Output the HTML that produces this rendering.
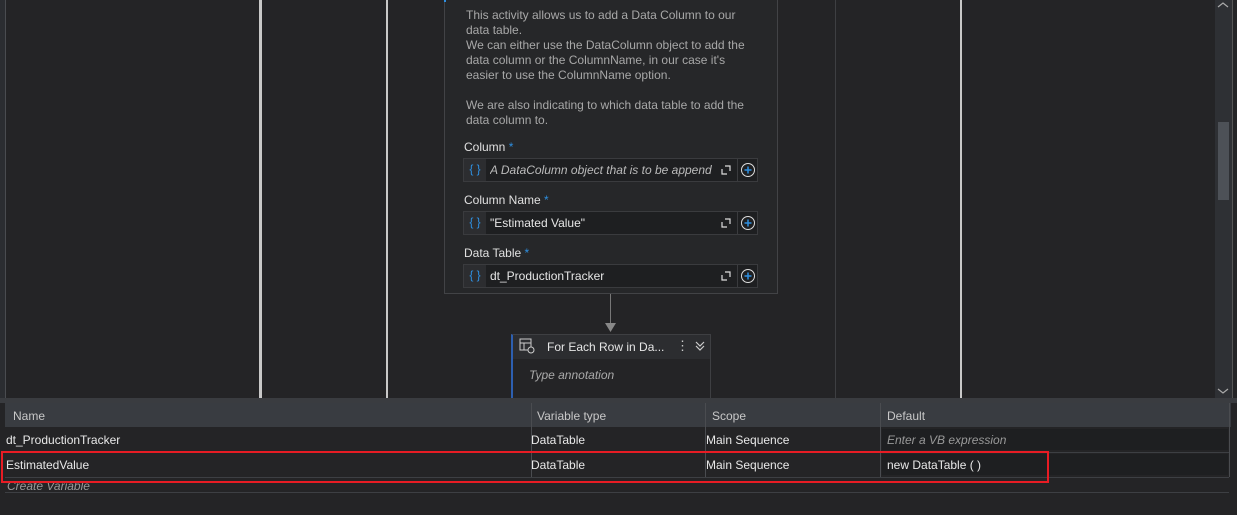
<!DOCTYPE html>
<html><head><style>
*{margin:0;padding:0;box-sizing:border-box}
body{width:1237px;height:515px;background:#242426;font-family:"Liberation Sans",sans-serif;position:relative;overflow:hidden;color:#ddd}
.a{position:absolute}
.lbl{font-size:12px;color:#e0e0e0}
.star{color:#2e8fe0}
.fld{position:absolute;left:463px;width:295px;height:24px;border:1px solid #3a3b3e;background:#1e1f21}
.fld .br{position:absolute;left:0;top:0;width:22px;height:22px;background:#2c2d30;color:#2e8fe0;font-size:12px;text-align:center;line-height:21px}
.fld .tx{position:absolute;left:26px;top:4px;font-size:12px;color:#e6e6e6;white-space:nowrap;width:224px;overflow:hidden}
.fld .ex{position:absolute;left:257px;top:6px;width:10px;height:10px}
.fld .pl{position:absolute;left:273px;top:0;width:21px;height:22px;border-left:1px solid #3a3b3e}
.cell{position:absolute;font-size:12px;color:#e8e8e8;white-space:nowrap}
</style></head><body>
<div class="a" style="left:0;top:0;width:5px;height:400px;background:#2b2d31"></div>
<div class="a" style="left:5px;top:0;width:1px;height:400px;background:#4a4c50"></div>
<div class="a" style="left:259px;top:0;width:3px;height:400px;background:#c8c8c8"></div>
<div class="a" style="left:386px;top:0;width:2px;height:400px;background:#c8c8c8"></div>
<div class="a" style="left:835px;top:0;width:1px;height:400px;background:#3e3f42"></div>
<div class="a" style="left:960px;top:0;width:2px;height:400px;background:#c8c8c8"></div>
<!-- scrollbar -->
<div class="a" style="left:1215px;top:0;width:17px;height:400px;background:#2e3034"></div>
<div class="a" style="left:1218px;top:122px;width:11px;height:78px;background:#4d5157"></div>
<svg class="a" style="left:1217px;top:1px" width="12" height="8"><path d="M1 6L6 2L11 6" fill="none" stroke="#aaa" stroke-width="1.2"/></svg>
<svg class="a" style="left:1217px;top:387px" width="12" height="8"><path d="M1 2L6 6L11 2" fill="none" stroke="#aaa" stroke-width="1.2"/></svg>
<div class="a" style="left:1232px;top:0;width:1px;height:400px;background:#555"></div>
<!-- card -->
<div class="a" style="left:444px;top:-1px;width:334px;height:295px;background:#262729;border:1px solid #424346"></div>
<div class="a" style="left:444px;top:0;width:2px;height:2px;background:#2e8fe0"></div>
<div class="a" style="left:466px;top:8px;font-size:12px;line-height:15px;color:#a8a8a8;width:282px">This activity allows us to add a Data Column to our data table.<br>We can either use the DataColumn object to add the data column or the ColumnName, in our case it's easier to use the ColumnName option.<br><br>We are also indicating to which data table to add the data column to.</div>
<div class="a lbl" style="left:464px;top:140px">Column <span class="star">*</span></div>
<div class="fld" style="top:158px"><div class="br">{ }</div><div class="tx" style="font-style:italic;color:#bbb">A DataColumn object that is to be append</div>
<svg class="ex" viewBox="0 0 10 10"><path d="M1 4V9H6M4 1H9V6" fill="none" stroke="#ddd" stroke-width="1.2"/></svg><div class="pl"><svg width="21" height="22"><circle cx="10" cy="11" r="6.5" fill="none" stroke="#ddd"/><path d="M6.5 11h7M10 7.5v7" stroke="#2e8fe0" stroke-width="1.5"/></svg></div></div>
<div class="a lbl" style="left:464px;top:193px">Column Name <span class="star">*</span></div>
<div class="fld" style="top:211px"><div class="br">{ }</div><div class="tx">"Estimated Value"</div>
<svg class="ex" viewBox="0 0 10 10"><path d="M1 4V9H6M4 1H9V6" fill="none" stroke="#ddd" stroke-width="1.2"/></svg><div class="pl"><svg width="21" height="22"><circle cx="10" cy="11" r="6.5" fill="none" stroke="#ddd"/><path d="M6.5 11h7M10 7.5v7" stroke="#2e8fe0" stroke-width="1.5"/></svg></div></div>
<div class="a lbl" style="left:464px;top:246px">Data Table <span class="star">*</span></div>
<div class="fld" style="top:264px"><div class="br">{ }</div><div class="tx">dt_ProductionTracker</div>
<svg class="ex" viewBox="0 0 10 10"><path d="M1 4V9H6M4 1H9V6" fill="none" stroke="#ddd" stroke-width="1.2"/></svg><div class="pl"><svg width="21" height="22"><circle cx="10" cy="11" r="6.5" fill="none" stroke="#ddd"/><path d="M6.5 11h7M10 7.5v7" stroke="#2e8fe0" stroke-width="1.5"/></svg></div></div>
<!-- arrow -->
<div class="a" style="left:610px;top:294px;width:1px;height:30px;background:#777"></div>
<svg class="a" style="left:605px;top:323px" width="11" height="10"><path d="M0 0H11L5.5 9Z" fill="#888"/></svg>
<!-- for each -->
<div class="a" style="left:511px;top:334px;width:200px;height:66px;background:#242426;border:1px solid #3e3f42;border-left:2px solid #2d5fb0"></div>
<div class="a" style="left:513px;top:335px;width:197px;height:24px;background:#2c2d30"></div>
<svg class="a" style="left:519px;top:338px" width="16" height="16"><rect x="1" y="1" width="11" height="11" fill="none" stroke="#ccc"/><path d="M1 5h11M5 5v7" stroke="#ccc"/><circle cx="12" cy="12" r="3" fill="#2c2d30" stroke="#ccc"/></svg>
<div class="a" style="left:547px;top:340px;font-size:12px;color:#e6e6e6">For Each Row in Da...</div>
<div class="a" style="left:676px;top:338px;font-size:13px;color:#ccc">⋮</div>
<svg class="a" style="left:694px;top:340px" width="12" height="12"><path d="M2 2L6 6L10 2M2 6L6 10L10 6" fill="none" stroke="#ccc" stroke-width="1.2"/></svg>
<div class="a" style="left:529px;top:368px;font-size:12px;font-style:italic;color:#aaa">Type annotation</div>
<!-- bottom -->
<div class="a" style="left:0;top:398px;width:1237px;height:117px;background:#242426"></div>
<div class="a" style="left:0;top:398px;width:1237px;height:5px;background:#3a3c40"></div>
<div class="a" style="left:5px;top:403px;width:1226px;height:24px;background:#393c41"></div>
<div class="cell" style="left:13px;top:409px;color:#c8c8c8">Name</div>
<div class="cell" style="left:537px;top:409px;color:#c8c8c8">Variable type</div>
<div class="cell" style="left:712px;top:409px;color:#c8c8c8">Scope</div>
<div class="cell" style="left:887px;top:409px;color:#c8c8c8">Default</div>
<div class="a" style="left:531px;top:403px;width:1px;height:74px;background:#4a4c50"></div>
<div class="a" style="left:705px;top:403px;width:1px;height:74px;background:#4a4c50"></div>
<div class="a" style="left:880px;top:403px;width:1px;height:74px;background:#4a4c50"></div>
<div class="a" style="left:1229px;top:403px;width:1px;height:74px;background:#4a4c50"></div>
<div class="a" style="left:5px;top:452px;width:1224px;height:1px;background:#3d3f43"></div>
<div class="a" style="left:5px;top:477px;width:1224px;height:1px;background:#3d3f43"></div>
<div class="a" style="left:5px;top:492px;width:1224px;height:1px;background:#3d3f43"></div>
<div class="a" style="left:882px;top:429px;width:346px;height:21px;background:#1e1f21"></div>
<div class="a" style="left:882px;top:454px;width:346px;height:21px;background:#1e1f21"></div>
<div class="cell" style="left:6px;top:433px">dt_ProductionTracker</div>
<div class="cell" style="left:531px;top:433px">DataTable</div>
<div class="cell" style="left:706px;top:433px">Main Sequence</div>
<div class="cell" style="left:887px;top:433px;font-style:italic;color:#999">Enter a VB expression</div>
<div class="cell" style="left:6px;top:458px">EstimatedValue</div>
<div class="cell" style="left:531px;top:458px">DataTable</div>
<div class="cell" style="left:706px;top:458px">Main Sequence</div>
<div class="cell" style="left:887px;top:458px">new DataTable ( )</div>
<div class="cell" style="left:7px;top:479px;font-style:italic;color:#999">Create Variable</div>
<div class="a" style="left:1px;top:451px;width:1048px;height:32px;border:2px solid #e81c24"></div>
</body></html>
